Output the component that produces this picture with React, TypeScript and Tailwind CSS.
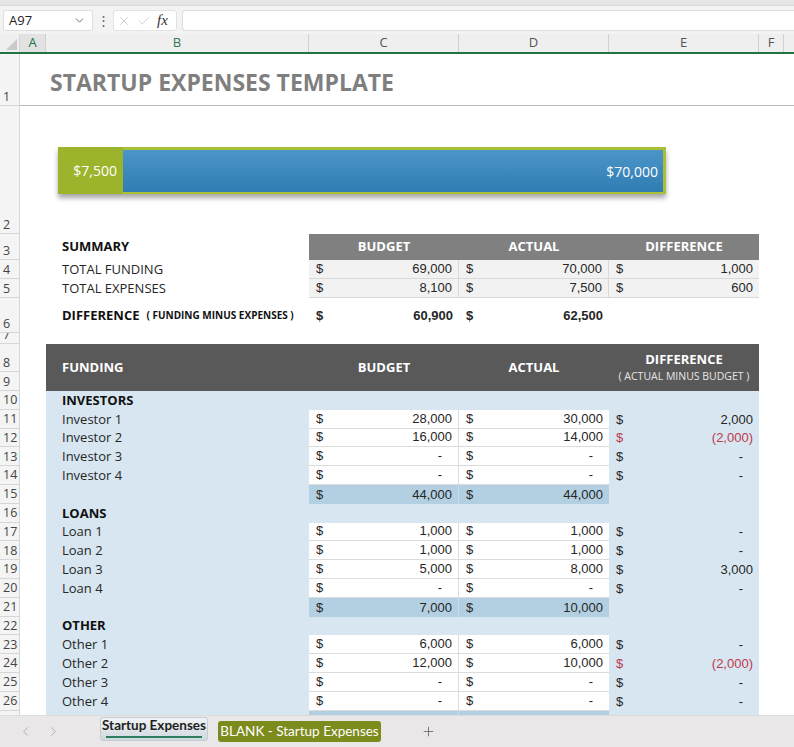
import type { ReactNode } from "react";
import { ChevronDown, ChevronLeft, ChevronRight, X, Check, Plus } from "lucide-react";

type Line = { label: string; budget: string; actual: string; diff: string; neg?: boolean };
type Section = { title: string; first: number; lines: Line[]; total: [string, string] };

const sections: Section[] = [
  {
    title: "INVESTORS",
    first: 10,
    lines: [
      { label: "Investor 1", budget: "28,000", actual: "30,000", diff: "2,000" },
      { label: "Investor 2", budget: "16,000", actual: "14,000", diff: "(2,000)", neg: true },
      { label: "Investor 3", budget: "-", actual: "-", diff: "-" },
      { label: "Investor 4", budget: "-", actual: "-", diff: "-" },
    ],
    total: ["44,000", "44,000"],
  },
  {
    title: "LOANS",
    first: 16,
    lines: [
      { label: "Loan 1", budget: "1,000", actual: "1,000", diff: "-" },
      { label: "Loan 2", budget: "1,000", actual: "1,000", diff: "-" },
      { label: "Loan 3", budget: "5,000", actual: "8,000", diff: "3,000" },
      { label: "Loan 4", budget: "-", actual: "-", diff: "-" },
    ],
    total: ["7,000", "10,000"],
  },
  {
    title: "OTHER",
    first: 22,
    lines: [
      { label: "Other 1", budget: "6,000", actual: "6,000", diff: "-" },
      { label: "Other 2", budget: "12,000", actual: "10,000", diff: "(2,000)", neg: true },
      { label: "Other 3", budget: "-", actual: "-", diff: "-" },
      { label: "Other 4", budget: "-", actual: "-", diff: "-" },
    ],
    total: ["18,000", "16,000"],
  },
];

// Excel aligns cell text to the bottom of the row
const cellText = "flex items-end pb-[3px] leading-none";

const RowHead = ({ n, h = "h-full" }: { n: number | string; h?: string }) => (
  <div
    className={`w-[20px] shrink-0 ${h} bg-[#f4f4f4] border-r border-b border-[#d6d6d6] flex items-end pl-[3px] pb-[2px] text-[12.5px] leading-none text-[#444] overflow-hidden`}
  >
    {n}
  </div>
);

const Row = ({ n, h, children }: { n: number | string; h: string; children?: ReactNode }) => (
  <div className={`flex ${h}`}>
    <RowHead n={n} />
    <div className="flex-1 grid grid-cols-[26px_263px_150px_150px_150px_1fr]">{children}</div>
  </div>
);

const Money = ({ v, neg, bold, className = "" }: { v: string; neg?: boolean; bold?: boolean; className?: string }) => (
  <div
    className={`${cellText} justify-between pl-[7px] pr-[6px] font-['Liberation_Sans',sans-serif] text-[13px] ${
      bold ? "font-bold" : ""
    } ${neg ? "text-[#c0394e]" : "text-[#262626]"} ${className}`}
  >
    <span>$</span>
    <span className={v === "-" ? "pr-[10px]" : ""}>{v}</span>
  </div>
);

const Blank = ({ className = "" }: { className?: string }) => <div className={className} />;

function FormulaBar() {
  return (
    <div className="h-[34px] shrink-0 bg-[#f3f3f3] flex flex-col">
      <div className="h-[6px] bg-[#e6e6e6] border-b border-[#d8d8d8]" />
      <div className="flex items-center pt-[1px] h-[28px]">
        <div className="ml-[3px] w-[90px] h-[21px] bg-white rounded-[3px] border border-[#dedede] flex items-center justify-between pl-[5px] pr-[6px]">
          <span className="text-[13px] text-[#222]">A97</span>
          <ChevronDown size={13} strokeWidth={1.5} className="text-[#555]" />
        </div>
        <div className="w-[20px] text-center text-[#666] text-[13px] leading-none">⋮</div>
        <div className="w-[64px] h-[21px] bg-white rounded-[3px] border border-[#e2e2e2] flex items-center pl-[3px] gap-[6px]">
          <X size={14} strokeWidth={1.2} className="text-[#b9b9b9]" />
          <Check size={14} strokeWidth={1.2} className="text-[#b9b9b9]" />
          <span className="font-['Liberation_Serif',serif] italic text-[15px] text-[#333] leading-none">fx</span>
        </div>
        <div className="ml-[5px] flex-1 h-[21px] bg-white rounded-l-[3px] border border-r-0 border-[#dedede]" />
      </div>
    </div>
  );
}

function ColumnHeads() {
  const cols: { k: string; w: string; c: string }[] = [
    { k: "A", w: "w-[26px]", c: "text-[#217346] bg-[#e2e2e2]" },
    { k: "B", w: "w-[263px]", c: "text-[#2f7a55]" },
    { k: "C", w: "w-[150px]", c: "text-[#555]" },
    { k: "D", w: "w-[150px]", c: "text-[#555]" },
    { k: "E", w: "w-[150px]", c: "text-[#555]" },
    { k: "F", w: "w-[25px]", c: "text-[#555]" },
  ];
  return (
    <div className="flex h-[20px] shrink-0 bg-[#efefef] border-b-2 border-[#217346]">
      <div className="w-[20px] shrink-0 border-r border-[#d6d6d6] flex items-end justify-end p-[2px]">
        <svg width="11" height="11" viewBox="0 0 11 11">
          <polygon points="11,0 11,11 0,11" fill="#c9c9c9" />
        </svg>
      </div>
      {cols.map((c) => (
        <div
          key={c.k}
          className={`${c.w} shrink-0 border-r border-[#d0d0d0] flex items-center justify-center text-[13px] ${c.c}`}
        >
          {c.k}
        </div>
      ))}
      <div className="flex-1" />
    </div>
  );
}

function ProgressBar() {
  return (
    <div className="ml-[12px] mt-[41px] w-[608px] h-[47px] flex bg-[#a8c038] shadow-[0_4px_5px_rgba(0,0,0,0.35)]">
      <div className="w-[65px] bg-[#9bb42c] flex items-center justify-end pr-[6px] text-white text-[14px]">$7,500</div>
      <div className="flex-1 mt-[3px] mb-[2px] mr-[3px] bg-gradient-to-b from-[#4b95c8] to-[#2f7db3] flex items-center justify-end pr-[5px] text-white text-[14px]">
        $70,000
      </div>
    </div>
  );
}

function SectionRows({ s }: { s: Section }) {
  const blue = "bg-[#d7e6f0]";
  const white = "bg-white border-b border-[#dcdcdc]";
  return (
    <>
      <Row n={s.first} h="h-[18.8px]">
        <Blank />
        <div className={`${blue} ${cellText} pl-[16px] font-bold text-[13px] text-[#111]`}>{s.title}</div>
        <Blank className={blue} />
        <Blank className={blue} />
        <Blank className={blue} />
        <Blank />
      </Row>
      {s.lines.map((l, i) => (
        <Row key={l.label} n={s.first + 1 + i} h="h-[18.8px]">
          <Blank />
          <div className={`${blue} ${cellText} pl-[16px] text-[13px] text-[#262626]`}>{l.label}</div>
          <Money v={l.budget} className={`${white} border-r`} />
          <Money v={l.actual} className={white} />
          <Money v={l.diff} neg={l.neg} className={blue} />
          <Blank />
        </Row>
      ))}
      <Row n={s.first + 5} h="h-[18.8px]">
        <Blank />
        <Blank className={blue} />
        <Money v={s.total[0]} className="bg-[#b3d0e3] border-r border-[#c9dceb]" />
        <Money v={s.total[1]} className="bg-[#b3d0e3]" />
        <Blank className={blue} />
        <Blank />
      </Row>
    </>
  );
}

function Tabs() {
  return (
    <div className="h-[32px] shrink-0 bg-[#e9e7e7] flex items-center border-t border-[#dcdcdc] font-['Lato',sans-serif]">
      <ChevronLeft size={15} strokeWidth={1.3} className="ml-[18px] text-[#a3a3a3]" />
      <ChevronRight size={15} strokeWidth={1.3} className="ml-[13px] text-[#a3a3a3]" />
      <div className="ml-[39px] mt-[-6px] w-[108px] h-[24px] rounded-[3px] border border-[#c4ccd4] bg-gradient-to-b from-[#f1f4f6] to-[#cfd8df] flex flex-col items-center justify-center">
        <span className="text-[13.5px] font-bold text-[#1f1f1f] leading-none whitespace-nowrap">Startup Expenses</span>
        <span className="mt-[3px] w-[96px] h-[2px] bg-[#2e7d5e]" />
      </div>
      <div className="ml-[10px] w-[163px] h-[21px] rounded-[3px] bg-[#7d8b1d] flex items-center justify-center text-white text-[13.5px] whitespace-nowrap">
        BLANK - Startup Expenses
      </div>
      <Plus size={15} strokeWidth={1.2} className="ml-[40px] text-[#555]" />
    </div>
  );
}

export default function App() {
  const sumCell = "bg-[#f2f2f2] border-b border-[#d9d9d9]";
  return (
    <div className="w-[794px] h-[747px] overflow-hidden bg-white font-['Open_Sans',sans-serif] flex flex-col">
      <FormulaBar />
      <ColumnHeads />

      <div className="h-[661px] shrink-0 overflow-hidden">
        {/* title */}
        <Row n={1} h="h-[52px]">
          <div className="col-span-6 border-b border-[#bdbdbd] flex items-end pl-[30px] pb-[11px]">
            <span className="font-bold text-[23px] leading-none text-[#7f7f7f]">STARTUP EXPENSES TEMPLATE</span>
          </div>
        </Row>

        {/* funding vs expenses bar */}
        <Row n={2} h="h-[128px]">
          <Blank />
          <div className="col-span-5">
            <ProgressBar />
          </div>
        </Row>

        {/* summary */}
        <Row n={3} h="h-[26px]">
          <Blank />
          <div className="pl-[16px] flex items-center font-bold text-[13px] text-[#111]">SUMMARY</div>
          {["BUDGET", "ACTUAL", "DIFFERENCE"].map((t) => (
            <div key={t} className="bg-[#808080] flex items-center justify-center font-bold text-[13px] text-white">
              {t}
            </div>
          ))}
          <Blank />
        </Row>
        <Row n={4} h="h-[19px]">
          <Blank />
          <div className={`${cellText} pl-[16px] text-[13px] text-[#262626]`}>TOTAL FUNDING</div>
          <Money v="69,000" className={`${sumCell} border-r`} />
          <Money v="70,000" className={`${sumCell} border-r`} />
          <Money v="1,000" className={sumCell} />
          <Blank />
        </Row>
        <Row n={5} h="h-[19px]">
          <Blank />
          <div className={`${cellText} pl-[16px] text-[13px] text-[#262626]`}>TOTAL EXPENSES</div>
          <Money v="8,100" className={`${sumCell} border-r`} />
          <Money v="7,500" className={`${sumCell} border-r`} />
          <Money v="600" className={sumCell} />
          <Blank />
        </Row>
        <Row n={6} h="h-[35px]">
          <Blank />
          <div className="pl-[16px] flex items-center gap-[7px] font-bold text-[#111]">
            <span className="text-[13px]">DIFFERENCE</span>
            <span className="text-[10px]">( FUNDING MINUS EXPENSES )</span>
          </div>
          <Money v="60,900" bold className="!items-center !pb-0" />
          <Money v="62,500" bold className="!items-center !pb-0" />
          <Blank />
          <Blank />
        </Row>
        <Row n={7} h="h-[11px]" />

        {/* funding table header, rows 8 and 9 merged */}
        <div className="flex h-[47px]">
          <div className="w-[20px] shrink-0 flex flex-col">
            <RowHead n={8} h="h-[28px]" />
            <RowHead n={9} h="h-[19px]" />
          </div>
          <div className="flex-1 grid grid-cols-[26px_263px_150px_150px_150px_1fr]">
            <Blank />
            <div className="bg-[#595959] pl-[16px] flex items-center font-bold text-[13px] text-white">FUNDING</div>
            <div className="bg-[#595959] flex items-center justify-center font-bold text-[13px] text-white">BUDGET</div>
            <div className="bg-[#595959] flex items-center justify-center font-bold text-[13px] text-white">ACTUAL</div>
            <div className="bg-[#595959] flex flex-col items-center justify-center text-white">
              <span className="font-bold text-[13px] leading-[17px]">DIFFERENCE</span>
              <span className="text-[10.5px] leading-[16px] text-[#e6e6e6]">( ACTUAL MINUS BUDGET )</span>
            </div>
            <Blank />
          </div>
        </div>

        {sections.map((s) => (
          <SectionRows key={s.title} s={s} />
        ))}
      </div>

      <Tabs />
    </div>
  );
}
